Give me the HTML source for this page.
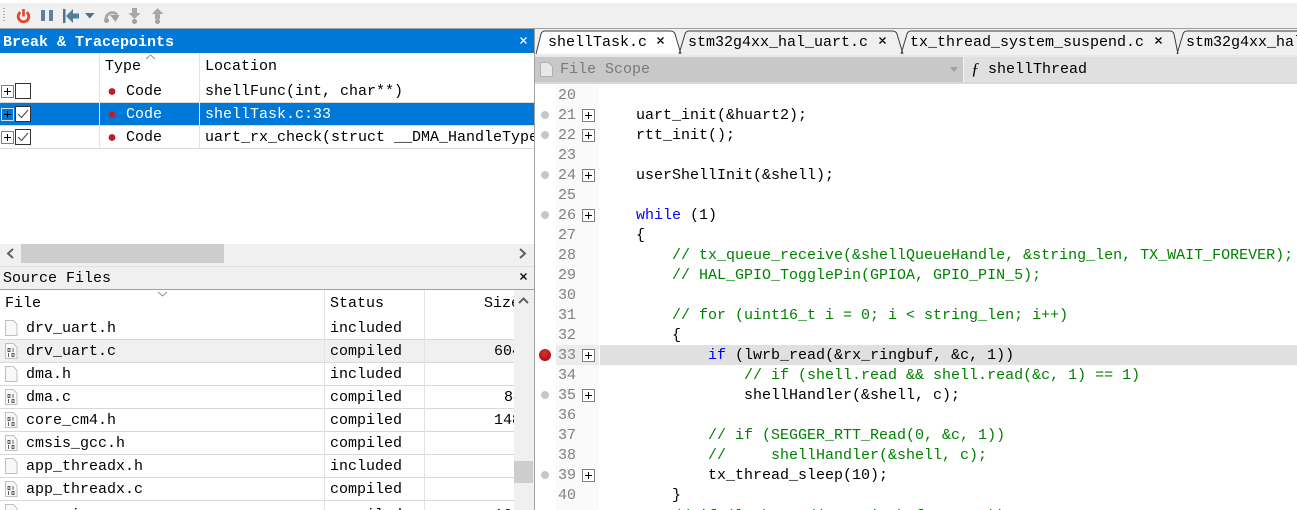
<!DOCTYPE html>
<html><head><meta charset="utf-8">
<style>
html,body{margin:0;padding:0}
#p{position:relative;width:1297px;height:510px;overflow:hidden;background:#fff;font-family:"Liberation Mono","DejaVu Sans Mono",monospace;font-size:15px;color:#000}
#p div{position:absolute}
.t{white-space:pre;line-height:20px;height:20px}
.g{color:#008000}.b{color:#0000ff}.n{color:#808080}
.c{white-space:pre;line-height:20px;height:20px;left:600px}
.r{background:#d9d9d9;height:1px}
.f{width:11px;height:11px;border:1px solid #808080;background:#fff}
.f:before{content:"";position:absolute;left:2px;top:5px;width:7px;height:1px;background:#000}
.f:after{content:"";position:absolute;left:5px;top:2px;width:1px;height:7px;background:#000}
.d{width:8px;height:8px;border-radius:50%;background:#c8c8c8;left:541px}
</style></head><body><div id="p">

<!-- toolbar -->
<div style="left:0;top:3px;width:1297px;height:25px;background:#f0f0f0"></div>
<div style="left:0;top:28px;width:1297px;height:1px;background:#a0a0a0"></div>
<svg style="position:absolute;left:0;top:0" width="170" height="28">
<g fill="#b0b0b0"><rect x="3" y="8" width="2" height="1"/><rect x="3" y="11" width="2" height="1"/><rect x="3" y="14" width="2" height="1"/><rect x="3" y="17" width="2" height="1"/><rect x="3" y="20" width="2" height="1"/></g>
<path d="M20.300 12.300a5.300 5.300 0 1 0 6.400 0" fill="none" stroke="#e2482a" stroke-width="2.800"/><rect x="22.200" y="9" width="2.600" height="7.500" fill="#e2482a"/>
<rect x="41" y="10" width="4" height="11" fill="#5f7f9f"/><rect x="49" y="10" width="4" height="11" fill="#5f7f9f"/>
<rect x="63" y="9" width="2.500" height="14" fill="#4f7396"/><path d="M66 16l7-7v4.500h6v5h-6V23z" fill="#4f7f9f"/>
<path d="M85 13h9.500l-4.750 5.500z" fill="#4f6f8f"/>
<path d="M106 20a6.500 6.500 0 0 1 11-5.500" fill="none" stroke="#a8a8a8" stroke-width="3"/><path d="M110 15h9.500l-4 7z" fill="#a0a0a0"/><circle cx="106.500" cy="20.500" r="2.500" fill="#a0a0a0"/>
<path d="M132 8h5v5h3.500l-6 6-6-6h3.500z" fill="#a8a8a8"/><circle cx="134.500" cy="21.500" r="2.500" fill="#a0a0a0"/>
<path d="M157.500 8l6 6h-3.500v5h-5v-5H152z" fill="#a8a8a8"/><circle cx="157.500" cy="21.500" r="2.500" fill="#a0a0a0"/>
</svg>

<!-- breakpoints panel -->
<div style="left:0;top:29px;width:534px;height:24px;background:#0078d7"></div>
<div class="t" style="left:3px;top:33px;color:#fff;font-weight:bold">Break &amp; Tracepoints</div>
<svg style="position:absolute;left:519px;top:36px" width="10" height="10"><path d="M1.500 1.500l6 6M7.500 1.500l-6 6" stroke="#fff" stroke-width="1.300"/></svg>
<div class="t" style="left:105px;top:57px">Type</div>
<div class="t" style="left:205px;top:57px">Location</div>
<svg style="position:absolute;left:145px;top:54px" width="12" height="6"><path d="M1 5l4.500-4 4.500 4" fill="none" stroke="#909090"/></svg>
<div style="left:0;top:103px;width:534px;height:22px;background:#0078d7"></div>
<div class="r" style="left:0;top:102px;width:534px"></div>
<div class="r" style="left:0;top:125px;width:534px"></div>
<div class="r" style="left:0;top:148px;width:534px"></div>
<div style="left:99px;top:53px;width:1px;height:96px;background:#e3e3e3"></div>
<div style="left:199px;top:53px;width:1px;height:96px;background:#e3e3e3"></div>
<div class="f" style="left:1px;top:85px;background:transparent"></div>
<div class="f" style="left:1px;top:108px;background:transparent;border-color:#ddd"></div>
<div class="f" style="left:1px;top:131px;background:transparent"></div>
<svg style="position:absolute;left:15px;top:83px" width="17" height="64">
<rect x=".5" y=".5" width="15" height="15" fill="#fff" stroke="#333"/>
<rect x=".5" y="23.500" width="15" height="15" fill="#fff" stroke="#333"/>
<rect x=".5" y="46.500" width="15" height="15" fill="#fff" stroke="#333"/>
<path d="M3 31l3.500 3.500L13 27M3 54l3.500 3.500L13 50" fill="none" stroke="#555" stroke-width="1.200"/>
</svg>
<svg style="position:absolute;left:105px;top:85px" width="14" height="60">
<circle cx="7" cy="6.500" r="3.400" fill="#c01c28"/><circle cx="7" cy="29.500" r="3.400" fill="#c01c28"/><circle cx="7" cy="52.500" r="3.400" fill="#c01c28"/>
</svg>
<div class="t" style="left:126px;top:82px">Code</div>
<div class="t" style="left:126px;top:105px;color:#fff">Code</div>
<div class="t" style="left:126px;top:128px">Code</div>
<div class="t" style="left:205px;top:82px">shellFunc(int, char**)</div>
<div class="t" style="left:205px;top:105px;color:#fff">shellTask.c:33</div>
<div class="t" style="left:205px;top:128px;width:329px;overflow:hidden">uart_rx_check(struct __DMA_HandleTypeDef *hdma)</div>

<!-- h scrollbar -->
<div style="left:0;top:244px;width:534px;height:22px;background:#f0f0f0"></div>
<div style="left:21px;top:244px;width:203px;height:19px;background:#cdcdcd"></div>
<svg style="position:absolute;left:0;top:244px" width="534" height="20"><path d="M13 5l-5 4.500 5 4.500M520 5l5 4.500-5 4.500" fill="none" stroke="#606060" stroke-width="2"/></svg>

<!-- source files -->
<div style="left:0;top:267px;width:534px;height:22px;background:#f0f0f0"></div>
<div style="left:0;top:266px;width:534px;height:1px;background:#e0e0e0"></div>
<div style="left:0;top:289px;width:534px;height:1px;background:#a0a0a0"></div>
<div class="t" style="left:3px;top:269px">Source Files</div>
<svg style="position:absolute;left:519px;top:272px" width="10" height="10"><path d="M1.500 1.500l6 6M7.500 1.500l-6 6" stroke="#000" stroke-width="1.300"/></svg>
<svg style="position:absolute;left:157px;top:291px" width="12" height="6"><path d="M1 1l4.500 4 4.500-4" fill="none" stroke="#909090"/></svg>
<div class="t" style="left:5px;top:294px">File</div>
<div class="t" style="left:330px;top:294px">Status</div>
<div class="t" style="left:484px;top:294px;width:30px;overflow:hidden">Size</div>
<div style="left:0;top:340px;width:514px;height:22px;background:#f0f0f0"></div>
<div class="r" style="left:0;top:339px;width:514px"></div>
<div class="r" style="left:0;top:362px;width:514px"></div>
<div class="r" style="left:0;top:385px;width:514px"></div>
<div class="r" style="left:0;top:408px;width:514px"></div>
<div class="r" style="left:0;top:431px;width:514px"></div>
<div class="r" style="left:0;top:454px;width:514px"></div>
<div class="r" style="left:0;top:477px;width:514px"></div>
<div class="r" style="left:0;top:500px;width:514px"></div>
<div style="left:324px;top:290px;width:1px;height:220px;background:#e3e3e3"></div>
<div style="left:424px;top:290px;width:1px;height:220px;background:#e3e3e3"></div>
<svg style="position:absolute;left:5px;top:320px" width="14" height="190">
<defs>
<g id="doc"><path d="M.5.5h8l3.500 4v11H.5z" fill="#f8f8f8" stroke="#c0c0c0"/></g>
<g id="bin" fill="none" stroke="#555" stroke-width=".9"><path d="M3 5.500h2v3H3zM8 5v4M3.500 10v4M7 10.500h2v3H7z"/></g>
</defs>
<use href="#doc" y="0"/><use href="#doc" y="23"/><use href="#doc" y="46"/><use href="#doc" y="69"/><use href="#doc" y="92"/><use href="#doc" y="115"/><use href="#doc" y="138"/><use href="#doc" y="161"/><use href="#doc" y="184"/>
<use href="#bin" y="23"/><use href="#bin" y="69"/><use href="#bin" y="92"/><use href="#bin" y="115"/><use href="#bin" y="161"/>
</svg>
<div class="t" style="left:26px;top:319px">drv_uart.h</div>
<div class="t" style="left:26px;top:342px">drv_uart.c</div>
<div class="t" style="left:26px;top:365px">dma.h</div>
<div class="t" style="left:26px;top:388px">dma.c</div>
<div class="t" style="left:26px;top:411px">core_cm4.h</div>
<div class="t" style="left:26px;top:434px">cmsis_gcc.h</div>
<div class="t" style="left:26px;top:457px">app_threadx.h</div>
<div class="t" style="left:26px;top:480px">app_threadx.c</div>
<div class="t" style="left:26px;top:506px">usrmsi.c</div>
<div class="t" style="left:330px;top:319px">included</div>
<div class="t" style="left:330px;top:342px">compiled</div>
<div class="t" style="left:330px;top:365px">included</div>
<div class="t" style="left:330px;top:388px">compiled</div>
<div class="t" style="left:330px;top:411px">compiled</div>
<div class="t" style="left:330px;top:434px">compiled</div>
<div class="t" style="left:330px;top:457px">included</div>
<div class="t" style="left:330px;top:480px">compiled</div>
<div class="t" style="left:330px;top:506px">compiled</div>
<div class="t" style="left:494px;top:342px;width:20px;overflow:hidden">604</div>
<div class="t" style="left:504px;top:388px;width:10px;overflow:hidden">84</div>
<div class="t" style="left:494px;top:411px;width:20px;overflow:hidden">148</div>
<div class="t" style="left:494px;top:506px;width:20px;overflow:hidden">16</div>
<div style="left:514px;top:290px;width:20px;height:220px;background:#f0f0f0"></div>
<div style="left:514px;top:461px;width:19px;height:22px;background:#cdcdcd"></div>
<svg style="position:absolute;left:514px;top:296px" width="20" height="10"><path d="M5 7l4.500-4.500L14 7" fill="none" stroke="#606060" stroke-width="2"/></svg>

<!-- splitter -->
<div style="left:534px;top:29px;width:1px;height:481px;background:#a0a0a0"></div>

<!-- tabs -->
<div style="left:535px;top:29px;width:762px;height:26px;background:#f0f0f0"></div>
<svg style="position:absolute;left:535px;top:29px" width="762" height="28">
<path d="M.5 24.500L6 4Q7 2 10 2H135Q139 2 140 5L146 24.500z" fill="#fff"/>
<path d="M1 25L6 5Q7 2 10 2H135Q139 2 140 5L146 25M144 25L150 5Q151 2 154 2H357Q361 2 362 5L368 25M366 25L372 5Q373 2 376 2H635Q638 2 639 5L643 25M642 25L648 5Q649 2 652 2H762" fill="none" stroke="#3c3c3c"/>
<rect x="0" y="26" width="762" height="2" fill="#e8e8e8"/>
<path d="M122.500 8.500l6 6M128.500 8.500l-6 6M344.500 8.500l6 6M350.500 8.500l-6 6M620.500 8.500l6 6M626.500 8.500l-6 6" stroke="#000" stroke-width="1.300"/>
</svg>
<div class="t" style="left:548px;top:33px">shellTask.c</div>
<div class="t" style="left:688px;top:33px">stm32g4xx_hal_uart.c</div>
<div class="t" style="left:910px;top:33px">tx_thread_system_suspend.c</div>
<div class="t" style="left:1186px;top:33px">stm32g4xx_hal_uart.c</div>

<!-- scope bar -->
<div style="left:535px;top:57px;width:429px;height:25px;background:#c8c8c8"></div>
<div style="left:964px;top:57px;width:333px;height:25px;background:#e0e0e0"></div>
<div style="left:963px;top:57px;width:1px;height:25px;background:#f0f0f0"></div>
<div style="left:535px;top:82px;width:762px;height:2px;background:#d8d8d8"></div>
<svg style="position:absolute;left:540px;top:62px" width="14" height="16"><path d="M.5.500h8l4 4v10H.5z" fill="#e8e8e8" stroke="#b0b0b0"/></svg>
<div class="t" style="left:560px;top:60px;color:#7a7a7a">File Scope</div>
<svg style="position:absolute;left:949px;top:66px" width="10" height="7"><path d="M1 1h8l-4 5z" fill="#a0a0a0"/></svg>
<div class="t" style="left:971px;top:59px;font-size:17px;font-style:italic;font-family:'Liberation Serif',serif">ƒ</div>
<div class="t" style="left:988px;top:60px">shellThread</div>

<!-- gutter -->
<div style="left:556px;top:84px;width:43px;height:426px;background:#fafafa"></div>
<div style="left:600px;top:345px;width:697px;height:20px;background:#e0e0e0"></div>
<div style="left:556px;top:345px;width:43px;height:20px;background:#ececec"></div>
<div class="d" style="top:111px"></div><div class="d" style="top:131px"></div><div class="d" style="top:171px"></div><div class="d" style="top:211px"></div><div class="d" style="top:391px"></div><div class="d" style="top:471px"></div>
<svg style="position:absolute;left:538px;top:348px" width="14" height="14"><defs><radialGradient id="rg" cx=".45" cy=".35" r=".7"><stop offset="0" stop-color="#e03030"/><stop offset="1" stop-color="#9c0f14"/></radialGradient></defs><circle cx="7" cy="7" r="6" fill="url(#rg)"/></svg>
<div class="f" style="left:582px;top:109px"></div><div class="f" style="left:582px;top:129px"></div><div class="f" style="left:582px;top:169px"></div><div class="f" style="left:582px;top:209px"></div><div class="f" style="left:582px;top:349px"></div><div class="f" style="left:582px;top:389px"></div><div class="f" style="left:582px;top:469px"></div>

<div class="t n" style="left:558px;top:86px">20</div><div class="t n" style="left:558px;top:106px">21</div><div class="t n" style="left:558px;top:126px">22</div><div class="t n" style="left:558px;top:146px">23</div><div class="t n" style="left:558px;top:166px">24</div><div class="t n" style="left:558px;top:186px">25</div><div class="t n" style="left:558px;top:206px">26</div><div class="t n" style="left:558px;top:226px">27</div><div class="t n" style="left:558px;top:246px">28</div><div class="t n" style="left:558px;top:266px">29</div><div class="t n" style="left:558px;top:286px">30</div><div class="t n" style="left:558px;top:306px">31</div><div class="t n" style="left:558px;top:326px">32</div><div class="t n" style="left:558px;top:346px">33</div><div class="t n" style="left:558px;top:366px">34</div><div class="t n" style="left:558px;top:386px">35</div><div class="t n" style="left:558px;top:406px">36</div><div class="t n" style="left:558px;top:426px">37</div><div class="t n" style="left:558px;top:446px">38</div><div class="t n" style="left:558px;top:466px">39</div><div class="t n" style="left:558px;top:486px">40</div>

<!-- code -->
<div class="c" style="top:106px">    uart_init(&amp;huart2);</div>
<div class="c" style="top:126px">    rtt_init();</div>
<div class="c" style="top:166px">    userShellInit(&amp;shell);</div>
<div class="c" style="top:206px">    <span class="b">while</span> (1)</div>
<div class="c" style="top:226px">    {</div>
<div class="c g" style="top:246px">        // tx_queue_receive(&amp;shellQueueHandle, &amp;string_len, TX_WAIT_FOREVER);</div>
<div class="c g" style="top:266px">        // HAL_GPIO_TogglePin(GPIOA, GPIO_PIN_5);</div>
<div class="c g" style="top:306px">        // for (uint16_t i = 0; i &lt; string_len; i++)</div>
<div class="c" style="top:326px">        {</div>
<div class="c" style="top:346px">            <span class="b">if</span> (lwrb_read(&amp;rx_ringbuf, &amp;c, 1))</div>
<div class="c g" style="top:366px">                // if (shell.read &amp;&amp; shell.read(&amp;c, 1) == 1)</div>
<div class="c" style="top:386px">                shellHandler(&amp;shell, c);</div>
<div class="c g" style="top:426px">            // if (SEGGER_RTT_Read(0, &amp;c, 1))</div>
<div class="c g" style="top:446px">            //     shellHandler(&amp;shell, c);</div>
<div class="c" style="top:466px">            tx_thread_sleep(10);</div>
<div class="c" style="top:486px">        }</div>
<div class="c g" style="top:507px">        // if (lwrb_read(&amp;rx_ringbuf, &amp;c, 1))</div>

</div></body></html>
